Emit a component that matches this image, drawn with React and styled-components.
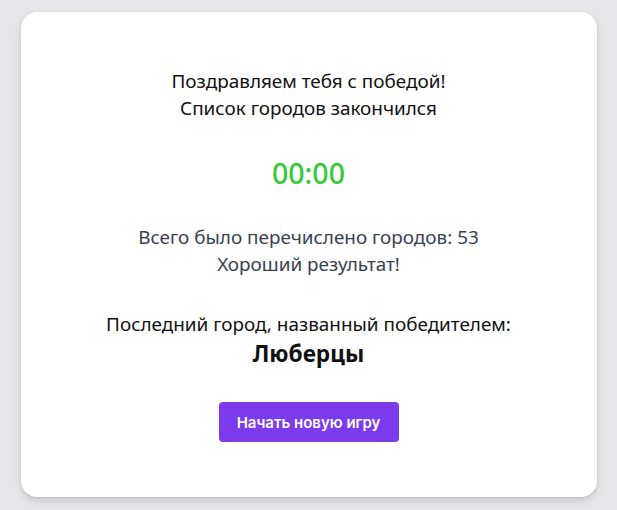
import React from "react"
import styled, { createGlobalStyle } from "styled-components"

const GlobalStyle = createGlobalStyle`
  html, body {
    margin: 0;
    padding: 0;
    background: #e5e7eb;
    font-family: "Noto Sans", "Open Sans", sans-serif;
  }
`

const Page = styled.main`
  padding: 12px 0;
  min-height: 510px;
  box-sizing: border-box;
`

const Card = styled.section`
  width: 576px;
  margin: 0 auto;
  box-sizing: border-box;
  background: #ffffff;
  border-radius: 16px;
  box-shadow: 0 4px 8px rgba(0, 0, 0, 0.12), 0 1px 3px rgba(0, 0, 0, 0.08);
  padding: 56px 32px 55px;
  display: flex;
  flex-direction: column;
  align-items: center;
  text-align: center;
`

const Message = styled.p`
  margin: 0;
  font-size: 18.9px;
  line-height: 27px;
  color: ${props => props.muted ? "#374151" : "#111111"};
`

const Timer = styled.div`
  margin: 33px 0 33px;
  font-size: 28.5px;
  line-height: 36px;
  font-weight: 500;
  color: #36c93a;
`

const Block = styled.div`
  margin-top: ${props => props.gap || 0}px;
`

const City = styled.div`
  font-size: 22.6px;
  line-height: 32px;
  font-weight: 700;
  color: #111111;
`

const Button = styled.button`
  margin-top: 32px;
  width: 180px;
  height: 40px;
  border: none;
  border-radius: 4px;
  background: #7c3aed;
  color: #ffffff;
  font-family: Inter, "Noto Sans", sans-serif;
  font-size: 15px;
  font-weight: 600;
  cursor: pointer;
`

const App = () => (
  <Page>
    <GlobalStyle />
    <Card>
      <Block>
        <Message>Поздравляем тебя с победой!</Message>
        <Message>Список городов закончился</Message>
      </Block>
      <Timer>00:00</Timer>
      <Block>
        <Message muted>Всего было перечислено городов: 53</Message>
        <Message muted>Хороший результат!</Message>
      </Block>
      <Block gap={33}>
        <Message>Последний город, названный победителем:</Message>
        <City>Люберцы</City>
      </Block>
      <Button>Начать новую игру</Button>
    </Card>
  </Page>
)

export default App
